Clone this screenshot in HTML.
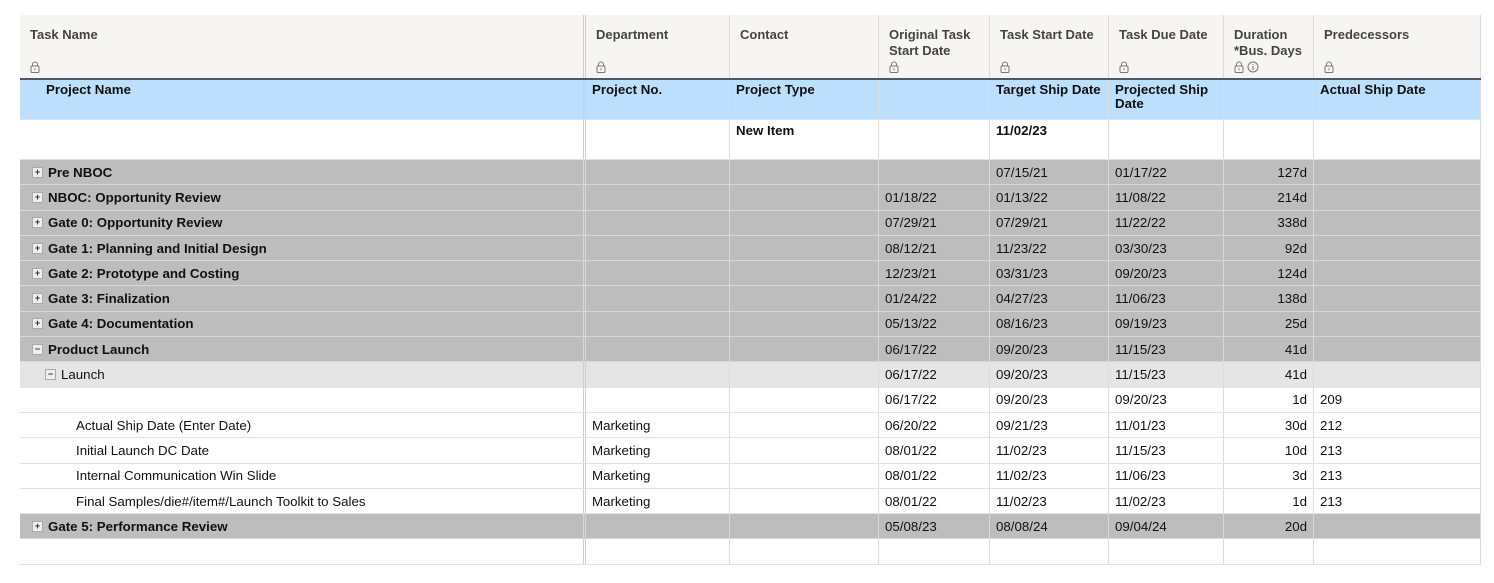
<!DOCTYPE html>
<html><head><style>
body{margin:0;width:1494px;height:583px;background:#fff;font-family:"Liberation Sans",sans-serif;font-size:13.3px;color:#111;position:relative;overflow:hidden}
.t{position:absolute;left:20px;top:15px;width:1461px}
.r{display:flex;box-sizing:border-box;border-bottom:1px solid #e2e2e2}
.c{box-sizing:border-box;padding:0 6px;border-right:1px solid #dcdcdc;white-space:nowrap;overflow:hidden;display:flex;align-items:center}
.c:nth-child(1){width:566px;border-right:3px double #cfcfcf}
.c:nth-child(2){width:144px}
.c:nth-child(3){width:149px}
.c:nth-child(4){width:111px}
.c:nth-child(5){width:119px}
.c:nth-child(6){width:115px}
.c:nth-child(7){width:90px;justify-content:flex-end}
.c:nth-child(8){width:167px}
.h{height:65px;background:#f6f5f4;border-bottom:2px solid #4a5a6a}
.h .c{align-items:flex-start;flex-direction:column;padding:12px 2px 0 10px;font-weight:bold;color:#444;font-size:13px;line-height:16px;position:relative;white-space:normal}
.h .c:nth-child(7){justify-content:flex-start}
.lk{position:absolute;bottom:5px;left:10px;display:flex;gap:3px}
.b{height:40px;background:#bcdffd}
.b .c{align-items:flex-start;font-weight:bold;padding-top:3px;line-height:14px;white-space:normal}
.w{height:40px}
.w .c{align-items:flex-start;font-weight:bold;padding-top:3px}
.g{height:25.3px;background:#bdbdbd;border-bottom:1px solid #d8d8d8}
.g .c{border-right-color:#d8d8d8}
.g .c:first-child{font-weight:bold;padding-left:12px}
.l{height:25.3px;background:#e5e5e5}
.n{height:25.3px}
.p{display:inline-block;width:9px;height:9px;background:#eee;border:1px solid #aaa;font-size:9px;line-height:9px;text-align:center;margin-right:5px;color:#333;font-weight:bold}
</style></head><body>
<svg width="0" height="0" style="position:absolute"><defs><symbol id="L" viewBox="0 0 10 12"><path d="M2.5 5V3.5a2.5 2.5 0 0 1 5 0V5" fill="none" stroke="#777" stroke-width="1"/><rect x="1" y="5" width="8" height="6.5" rx="1" fill="none" stroke="#777" stroke-width="1"/><path d="M5 7.3v2" stroke="#777" stroke-width="1"/></symbol><symbol id="I" viewBox="0 0 12 12"><circle cx="6" cy="6" r="5" fill="none" stroke="#777" stroke-width="1"/><path d="M6 5v4M6 3v1" stroke="#777" stroke-width="1"/></symbol></defs></svg>
<div class="t">
<div class="r h"><div class="c">Task Name<span class="lk"><svg width="10" height="12"><use href="#L"/></svg></span></div><div class="c">Department<span class="lk"><svg width="10" height="12"><use href="#L"/></svg></span></div><div class="c">Contact</div><div class="c">Original Task Start Date<span class="lk"><svg width="10" height="12"><use href="#L"/></svg></span></div><div class="c">Task Start Date<span class="lk"><svg width="10" height="12"><use href="#L"/></svg></span></div><div class="c">Task Due Date<span class="lk"><svg width="10" height="12"><use href="#L"/></svg></span></div><div class="c">Duration<br>*Bus. Days<span class="lk"><svg width="10" height="12"><use href="#L"/></svg><svg width="12" height="12"><use href="#I"/></svg></span></div><div class="c">Predecessors<span class="lk"><svg width="10" height="12"><use href="#L"/></svg></span></div></div>
<div class="r b"><div class="c" style="padding-left:26px">Project Name</div><div class="c">Project No.</div><div class="c">Project Type</div><div class="c"></div><div class="c">Target Ship Date</div><div class="c">Projected Ship Date</div><div class="c"></div><div class="c">Actual Ship Date</div></div>
<div class="r w"><div class="c"></div><div class="c"></div><div class="c">New Item</div><div class="c"></div><div class="c">11/02/23</div><div class="c"></div><div class="c"></div><div class="c"></div></div>
<div class="r g"><div class="c"><span class="p">+</span>Pre NBOC</div><div class="c"></div><div class="c"></div><div class="c"></div><div class="c">07/15/21</div><div class="c">01/17/22</div><div class="c">127d</div><div class="c"></div></div>
<div class="r g"><div class="c"><span class="p">+</span>NBOC: Opportunity Review</div><div class="c"></div><div class="c"></div><div class="c">01/18/22</div><div class="c">01/13/22</div><div class="c">11/08/22</div><div class="c">214d</div><div class="c"></div></div>
<div class="r g"><div class="c"><span class="p">+</span>Gate 0: Opportunity Review</div><div class="c"></div><div class="c"></div><div class="c">07/29/21</div><div class="c">07/29/21</div><div class="c">11/22/22</div><div class="c">338d</div><div class="c"></div></div>
<div class="r g"><div class="c"><span class="p">+</span>Gate 1: Planning and Initial Design</div><div class="c"></div><div class="c"></div><div class="c">08/12/21</div><div class="c">11/23/22</div><div class="c">03/30/23</div><div class="c">92d</div><div class="c"></div></div>
<div class="r g"><div class="c"><span class="p">+</span>Gate 2: Prototype and Costing</div><div class="c"></div><div class="c"></div><div class="c">12/23/21</div><div class="c">03/31/23</div><div class="c">09/20/23</div><div class="c">124d</div><div class="c"></div></div>
<div class="r g"><div class="c"><span class="p">+</span>Gate 3: Finalization</div><div class="c"></div><div class="c"></div><div class="c">01/24/22</div><div class="c">04/27/23</div><div class="c">11/06/23</div><div class="c">138d</div><div class="c"></div></div>
<div class="r g"><div class="c"><span class="p">+</span>Gate 4: Documentation</div><div class="c"></div><div class="c"></div><div class="c">05/13/22</div><div class="c">08/16/23</div><div class="c">09/19/23</div><div class="c">25d</div><div class="c"></div></div>
<div class="r g"><div class="c"><span class="p">−</span>Product Launch</div><div class="c"></div><div class="c"></div><div class="c">06/17/22</div><div class="c">09/20/23</div><div class="c">11/15/23</div><div class="c">41d</div><div class="c"></div></div>
<div class="r l"><div class="c" style="padding-left:25px"><span class="p">−</span>Launch</div><div class="c"></div><div class="c"></div><div class="c">06/17/22</div><div class="c">09/20/23</div><div class="c">11/15/23</div><div class="c">41d</div><div class="c"></div></div>
<div class="r n"><div class="c"></div><div class="c"></div><div class="c"></div><div class="c">06/17/22</div><div class="c">09/20/23</div><div class="c">09/20/23</div><div class="c">1d</div><div class="c">209</div></div>
<div class="r n"><div class="c" style="padding-left:56px">Actual Ship Date (Enter Date)</div><div class="c">Marketing</div><div class="c"></div><div class="c">06/20/22</div><div class="c">09/21/23</div><div class="c">11/01/23</div><div class="c">30d</div><div class="c">212</div></div>
<div class="r n"><div class="c" style="padding-left:56px">Initial Launch DC Date</div><div class="c">Marketing</div><div class="c"></div><div class="c">08/01/22</div><div class="c">11/02/23</div><div class="c">11/15/23</div><div class="c">10d</div><div class="c">213</div></div>
<div class="r n"><div class="c" style="padding-left:56px">Internal Communication Win Slide</div><div class="c">Marketing</div><div class="c"></div><div class="c">08/01/22</div><div class="c">11/02/23</div><div class="c">11/06/23</div><div class="c">3d</div><div class="c">213</div></div>
<div class="r n"><div class="c" style="padding-left:56px">Final Samples/die#/item#/Launch Toolkit to Sales</div><div class="c">Marketing</div><div class="c"></div><div class="c">08/01/22</div><div class="c">11/02/23</div><div class="c">11/02/23</div><div class="c">1d</div><div class="c">213</div></div>
<div class="r g"><div class="c"><span class="p">+</span>Gate 5: Performance Review</div><div class="c"></div><div class="c"></div><div class="c">05/08/23</div><div class="c">08/08/24</div><div class="c">09/04/24</div><div class="c">20d</div><div class="c"></div></div>
<div class="r n"><div class="c"></div><div class="c"></div><div class="c"></div><div class="c"></div><div class="c"></div><div class="c"></div><div class="c"></div><div class="c"></div></div>
</div>
</body></html>
